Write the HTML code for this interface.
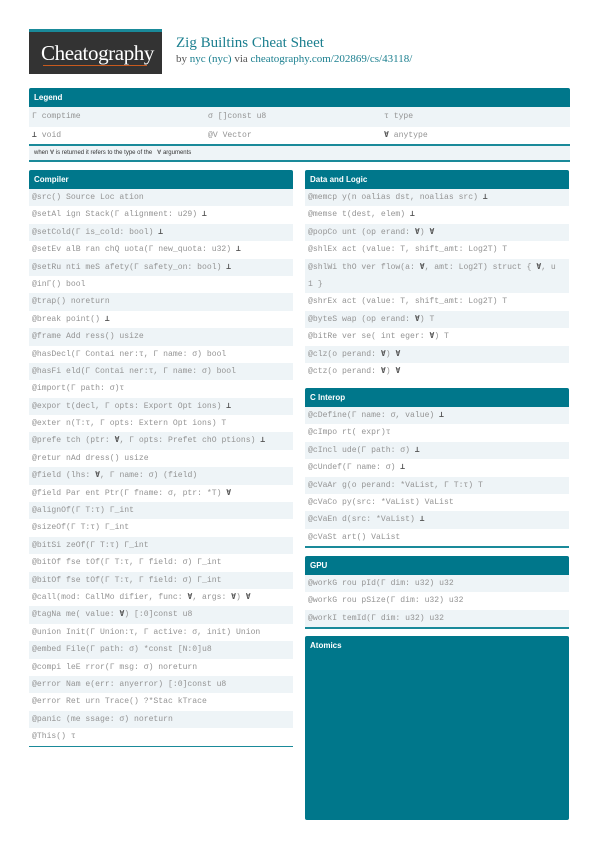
<!DOCTYPE html>
<html><head><style>
body{margin:0;width:600px;height:849px;background:#fff;position:relative;overflow:hidden}
.logo{position:absolute;left:29px;top:29px;width:133px;height:45px;background:#333;border-top:3px solid #1a8a9a;box-sizing:border-box}
.logo span{position:absolute;left:12px;top:9px;font:21px "Liberation Serif",serif;color:#fff;letter-spacing:-0.4px}
.logo i{position:absolute;left:14px;top:33px;width:104px;height:1px;background:#c85a1e}
.title{position:absolute;left:176px;top:35px;font:15px "Liberation Serif",serif;color:#1b7f8f}
.sub{position:absolute;left:176px;top:53px;font:11px "Liberation Serif",serif;color:#555}
.sub a{color:#1b7f8f;text-decoration:none}
.box{position:absolute;border-bottom:2px solid #1a8a9a;box-sizing:border-box}
.h{background:#00778b;color:#fff;font:bold 8px "Liberation Sans",sans-serif;height:19px;line-height:19px;padding-left:5px;border-radius:2px 2px 0 0}
.r{font:8.1px "Liberation Mono",monospace;height:17.4px;line-height:17.4px;color:#949494;padding-left:3px;white-space:pre;overflow:hidden}
.r:nth-child(even){background:#eef4f7}
.r:nth-child(odd){background:#fff}
.leg .r{display:flex}
.leg .r div{width:176px}
.r b{color:#555;font-weight:bold}
</style></head><body>
<div class="logo"><span>Cheatography</span><i></i></div>
<div class="title">Zig Builtins Cheat Sheet</div>
<div class="sub">by <a>nyc (nyc)</a> via <a>cheatography.com/202869/cs/43118/</a></div>

<div class="box leg" style="left:29px;top:88px;width:541px;height:74px">
<div class="h">Legend</div>
<div class="r" style="background:#eef4f7;height:20px;line-height:20px"><div>Γ comptime</div><div>σ []const u8</div><div>τ type</div></div>
<div class="r" style="background:#fff;height:17px;line-height:17px"><div><b>⊥</b> void</div><div>@V Vector</div><div><b>∀</b> anytype</div></div>
<div style="border-top:2px solid #1a8a9a;background:#eef4f7;height:16px;font:6px 'Liberation Sans',sans-serif;color:#333;padding:3px 0 0 5px;box-sizing:border-box">when ∀ is returned it refers to the type of the &nbsp;&nbsp;∀ arguments</div>
</div>

<div class="box" style="left:29px;top:170px;width:264px;height:577px">
<div class="h">Compiler</div>
<div class="r">@src() Source Loc ation</div>
<div class="r">@setAl ign Stack(Γ alignment: u29) <b>⊥</b></div>
<div class="r">@setCold(Γ is_cold: bool) <b>⊥</b></div>
<div class="r">@setEv alB ran chQ uota(Γ new_quota: u32) <b>⊥</b></div>
<div class="r">@setRu nti meS afety(Γ safety_on: bool) <b>⊥</b></div>
<div class="r">@inΓ() bool</div>
<div class="r">@trap() noreturn</div>
<div class="r">@break point() <b>⊥</b></div>
<div class="r">@frame Add ress() usize</div>
<div class="r">@hasDecl(Γ Contai ner:τ, Γ name: σ) bool</div>
<div class="r">@hasFi eld(Γ Contai ner:τ, Γ name: σ) bool</div>
<div class="r">@import(Γ path: σ)τ</div>
<div class="r">@expor t(decl, Γ opts: Export Opt ions) <b>⊥</b></div>
<div class="r">@exter n(T:τ, Γ opts: Extern Opt ions) T</div>
<div class="r">@prefe tch (ptr: <b>∀</b>, Γ opts: Prefet chO ptions) <b>⊥</b></div>
<div class="r">@retur nAd dress() usize</div>
<div class="r">@field (lhs: <b>∀</b>, Γ name: σ) (field)</div>
<div class="r">@field Par ent Ptr(Γ fname: σ, ptr: *T) <b>∀</b></div>
<div class="r">@alignOf(Γ T:τ) Γ_int</div>
<div class="r">@sizeOf(Γ T:τ) Γ_int</div>
<div class="r">@bitSi zeOf(Γ T:τ) Γ_int</div>
<div class="r">@bitOf fse tOf(Γ T:τ, Γ field: σ) Γ_int</div>
<div class="r">@bitOf fse tOf(Γ T:τ, Γ field: σ) Γ_int</div>
<div class="r">@call(mod: CallMo difier, func: <b>∀</b>, args: <b>∀</b>) <b>∀</b></div>
<div class="r">@tagNa me( value: <b>∀</b>) [:0]const u8</div>
<div class="r">@union Init(Γ Union:τ, Γ active: σ, init) Union</div>
<div class="r">@embed File(Γ path: σ) *const [N:0]u8</div>
<div class="r">@compi leE rror(Γ msg: σ) noreturn</div>
<div class="r">@error Nam e(err: anyerror) [:0]const u8</div>
<div class="r">@error Ret urn Trace() ?*Stac kTrace</div>
<div class="r">@panic (me ssage: σ) noreturn</div>
<div class="r">@This() τ</div>
</div>

<div class="box" style="left:305px;top:170px;width:264px;height:209px">
<div class="h">Data and Logic</div>
<div class="r">@memcp y(n oalias dst, noalias src) <b>⊥</b></div>
<div class="r">@memse t(dest, elem) <b>⊥</b></div>
<div class="r">@popCo unt (op erand: <b>∀</b>) <b>∀</b></div>
<div class="r">@shlEx act (value: T, shift_amt: Log2T) T</div>
<div class="r" style="height:34.8px;white-space:pre-wrap">@shlWi thO ver flow(a: <b>∀</b>, amt: Log2T) struct { <b>∀</b>, u
1 }</div>
<div class="r" style="background:#fff">@shrEx act (value: T, shift_amt: Log2T) T</div>
<div class="r" style="background:#eef4f7">@byteS wap (op erand: <b>∀</b>) T</div>
<div class="r" style="background:#fff">@bitRe ver se( int eger: <b>∀</b>) T</div>
<div class="r" style="background:#eef4f7">@clz(o perand: <b>∀</b>) <b>∀</b></div>
<div class="r" style="background:#fff">@ctz(o perand: <b>∀</b>) <b>∀</b></div>
</div>

<div class="box" style="left:305px;top:388px;width:264px;height:160px">
<div class="h">C Interop</div>
<div class="r">@cDefine(Γ name: σ, value) <b>⊥</b></div>
<div class="r">@cImpo rt( expr)τ</div>
<div class="r">@cIncl ude(Γ path: σ) <b>⊥</b></div>
<div class="r">@cUndef(Γ name: σ) <b>⊥</b></div>
<div class="r">@cVaAr g(o perand: *VaList, Γ T:τ) T</div>
<div class="r">@cVaCo py(src: *VaList) VaList</div>
<div class="r">@cVaEn d(src: *VaList) <b>⊥</b></div>
<div class="r">@cVaSt art() VaList</div>
</div>

<div class="box" style="left:305px;top:556px;width:264px;height:73px">
<div class="h">GPU</div>
<div class="r">@workG rou pId(Γ dim: u32) u32</div>
<div class="r">@workG rou pSize(Γ dim: u32) u32</div>
<div class="r">@workI temId(Γ dim: u32) u32</div>
</div>

<div style="position:absolute;left:305px;top:636px;width:264px;height:184px;background:#00778b;border-radius:2px">
<div class="h" style="background:none">Atomics</div>
</div>
</body></html>
